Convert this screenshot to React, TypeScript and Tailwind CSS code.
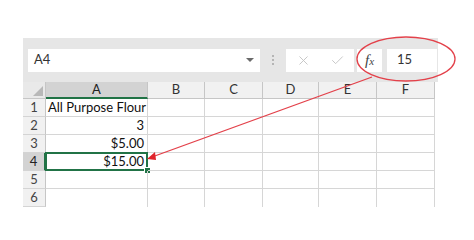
import { X, Check } from 'lucide-react';

const cols = [
  { label: 'A', w: 'w-[102px]' },
  { label: 'B', w: 'w-[57px]' },
  { label: 'C', w: 'w-[58px]' },
  { label: 'D', w: 'w-[56px]' },
  { label: 'E', w: 'w-[58px]' },
  { label: 'F', w: 'w-[58px]' },
];

const rows: { n: number; a: string; align: 'left' | 'right' }[] = [
  { n: 1, a: 'All Purpose Flour', align: 'left' },
  { n: 2, a: '3', align: 'right' },
  { n: 3, a: '$5.00', align: 'right' },
  { n: 4, a: '$15.00', align: 'right' },
  { n: 5, a: '', align: 'right' },
  { n: 6, a: '', align: 'right' },
];

function Toolbar() {
  return (
    <div className="flex items-center h-[44px] bg-[#e6e6e6] pl-[5px] w-[415px]">
      <div className="relative flex items-center w-[232px] h-[23px] bg-white pl-[6px] text-[13px] text-[#333]">
        A4
        <span className="absolute right-[6px] top-[9px] w-0 h-0 border-l-[4px] border-r-[4px] border-t-[4px] border-l-transparent border-r-transparent border-t-[#6a6a6a]" />
      </div>
      <div className="flex flex-col gap-[2px] ml-[12px] mr-[12px]">
        <span className="w-[2px] h-[2px] bg-[#b5b5b5]" />
        <span className="w-[2px] h-[2px] bg-[#b5b5b5]" />
        <span className="w-[2px] h-[2px] bg-[#b5b5b5]" />
      </div>
      <div className="flex items-center justify-around w-[68px] h-[23px] bg-white">
        <X className="w-[15px] h-[15px] text-[#c4c4c4]" strokeWidth={1.5} />
        <Check className="w-[15px] h-[15px] text-[#c4c4c4]" strokeWidth={1.5} />
      </div>
      <div className="flex items-center justify-center w-[25px] h-[23px] ml-[3px] bg-white">
        <span className="italic text-[15px] leading-none text-[#444] font-['Liberation_Serif',serif]">
          f<span className="text-[11px]">x</span>
        </span>
      </div>
      <div className="flex items-center w-[50px] h-[23px] ml-[5px] bg-white pl-[10px] text-[13px] text-[#333]">
        15
      </div>
    </div>
  );
}

function Grid() {
  return (
    <div className="flex flex-col w-[412px]">
      <div className="flex h-[17px]">
        <div className="relative w-[23px] h-full bg-[#e9e9e9] border-r border-b border-[#c6c6c6]">
          <span className="absolute right-[2px] bottom-[2px] w-[10px] h-[10px] bg-[#b8b8b8] [clip-path:polygon(100%_0,100%_100%,0_100%)]" />
        </div>
        {cols.map((c) => (
          <div
            key={c.label}
            className={`${c.w} h-full flex items-center justify-center text-[13px] border-r ${
              c.label === 'A'
                ? 'bg-[#d3d3d3] border-b-2 border-b-[#217346] border-r-[#c6c6c6] text-[#222]'
                : 'bg-[#f1f1f1] border-b border-b-[#c6c6c6] border-r-[#c6c6c6] text-[#333]'
            }`}
          >
            {c.label}
          </div>
        ))}
      </div>
      {rows.map((r) => (
        <div key={r.n} className="flex h-[18px]">
          <div
            className={`w-[23px] h-full flex items-center justify-center text-[13px] border-b border-b-[#d4d4d4] ${
              r.n === 4
                ? 'bg-[#d3d3d3] border-r-2 border-r-[#217346] text-[#222]'
                : 'bg-[#f1f1f1] border-r border-r-[#c6c6c6] text-[#444]'
            }`}
          >
            {r.n}
          </div>
          {cols.map((c, i) => (
            <div
              key={c.label}
              className={`relative ${c.w} h-full border-r border-r-[#d6d6d6] ${
                r.n === 6 ? '' : 'border-b border-b-[#d6d6d6]'
              } flex items-center text-[13px] text-[#111] ${
                r.align === 'right' ? 'justify-end pr-[3px]' : 'justify-start pl-[2px]'
              }`}
            >
              {i === 0 ? r.a : ''}
              {i === 0 && r.n === 4 && (
                <>
                  <span className="absolute -left-[1px] -top-[1px] -right-[1px] -bottom-[1px] border-2 border-[#217346]" />
                  <span className="absolute -right-[4px] -bottom-[4px] w-[7px] h-[7px] bg-[#217346] border border-white" />
                </>
              )}
            </div>
          ))}
        </div>
      ))}
    </div>
  );
}

export default function App() {
  return (
    <div className="relative w-[474px] h-[220px] bg-white overflow-hidden font-['Lato','Liberation_Sans',sans-serif]">
      <div className="flex flex-col pt-[38px] pl-[23px]">
        <Toolbar />
        <Grid />
      </div>
      <svg className="absolute inset-0 pointer-events-none" width="474" height="220" viewBox="0 0 474 220">
        <ellipse cx="406" cy="59" rx="49" ry="22" fill="none" stroke="#e3414a" strokeWidth="1.3" />
        <line x1="372" y1="77" x2="152" y2="157" stroke="#e3414a" strokeWidth="1.3" />
        <polygon points="147,159 155,152 156,160" fill="#e0242c" />
      </svg>
    </div>
  );
}
